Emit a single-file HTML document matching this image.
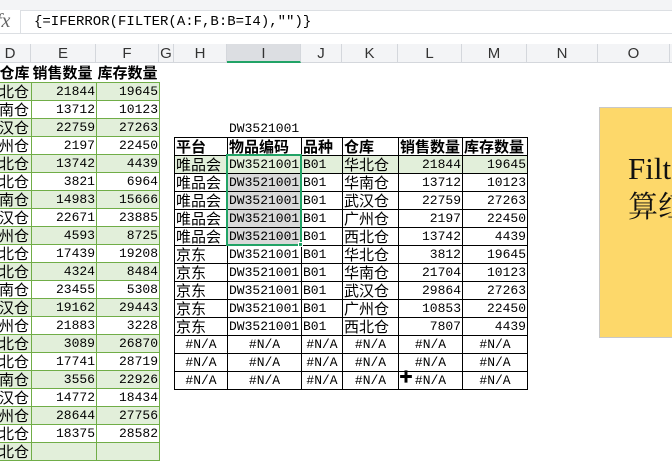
<!DOCTYPE html>
<html><head><meta charset="utf-8"><style>
*{margin:0;padding:0;box-sizing:border-box}
body{width:672px;height:444px;overflow:hidden;background:#fff;position:relative;font-family:"Liberation Sans","Noto Sans CJK SC",sans-serif}
.a{position:absolute}
.cj{font-family:"Noto Sans CJK SC","WenQuanYi Zen Hei",sans-serif;font-size:15px}
.mn{font-family:"Liberation Mono","Noto Sans CJK SC",monospace;font-size:13px}
.ch{position:absolute;top:44px;height:19px;font-size:15px;color:#333;text-align:center;line-height:19px;border-right:1px solid #d4d7dc}
table{border-collapse:collapse;table-layout:fixed;position:absolute}
td{height:18px;padding:0 1px;white-space:nowrap;overflow:hidden;line-height:17px}
.L td{border:1px solid #70ad47}
.L td:first-child{text-align:right;padding-right:2px}
.R td{border:1px solid #000}
.g td{background:#e2efda}
.r{text-align:right}
.c{text-align:center}
b{font-weight:700}
</style></head><body>
<div class="a" style="left:0;top:0;width:672px;height:10px;background:#f3f4f6"></div>
<div class="a" style="left:0;top:10px;width:672px;height:24px;background:#fff;border-bottom:1px solid #dcdfe3"></div>
<div class="a" style="left:-4px;top:10px;font-size:20px;color:#666;font-style:italic;font-family:'Liberation Serif',serif">fx</div>
<div class="a" style="left:20px;top:10px;width:660px;height:24px;border:1px solid #dcdfe3;border-right:none"></div>
<div class="a mn" style="left:34px;top:13px;font-size:14px;line-height:18px">{=IFERROR(FILTER(A:F,B:B=I4),"")}</div>
<div class="a" style="left:0;top:34px;width:672px;height:10px;background:#fff"></div>
<div class="a" style="left:0;top:44px;width:672px;height:19px;background:#f3f4f6;border-bottom:1px solid #d4d7dc"></div>
<div class="ch" style="left:-10px;width:41px">D</div>
<div class="ch" style="left:31px;width:65px">E</div>
<div class="ch" style="left:96px;width:63px">F</div>
<div class="ch" style="left:159px;width:15px">G</div>
<div class="ch" style="left:174px;width:53px">H</div>
<div class="ch" style="left:227px;width:74px;background:#dcdee2;border-bottom:2px solid #21a366">I</div>
<div class="ch" style="left:301px;width:41px">J</div>
<div class="ch" style="left:342px;width:56px">K</div>
<div class="ch" style="left:398px;width:64px">L</div>
<div class="ch" style="left:462px;width:65px">M</div>
<div class="ch" style="left:527px;width:71px">N</div>
<div class="ch" style="left:598px;width:72px">O</div>

<table class="L" style="left:-34px;top:63px;width:193px">
<colgroup><col style="width:65px"><col style="width:65px"><col style="width:63px"></colgroup>
<tr style="height:19px"><td class="cj" style="border:none;border-bottom:1px solid #70ad47"><b>仓库</b></td><td class="cj" style="border:none;border-bottom:1px solid #70ad47"><b>销售数量</b></td><td class="cj" style="border:none;border-bottom:1px solid #70ad47"><b>库存数量</b></td></tr>
<tr class="g"><td class="cj">华北仓</td><td class="mn r">21844</td><td class="mn r">19645</td></tr>
<tr><td class="cj">华南仓</td><td class="mn r">13712</td><td class="mn r">10123</td></tr>
<tr class="g"><td class="cj">武汉仓</td><td class="mn r">22759</td><td class="mn r">27263</td></tr>
<tr><td class="cj">广州仓</td><td class="mn r">2197</td><td class="mn r">22450</td></tr>
<tr class="g"><td class="cj">西北仓</td><td class="mn r">13742</td><td class="mn r">4439</td></tr>
<tr><td class="cj">华北仓</td><td class="mn r">3821</td><td class="mn r">6964</td></tr>
<tr class="g"><td class="cj">华南仓</td><td class="mn r">14983</td><td class="mn r">15666</td></tr>
<tr><td class="cj">武汉仓</td><td class="mn r">22671</td><td class="mn r">23885</td></tr>
<tr class="g"><td class="cj">广州仓</td><td class="mn r">4593</td><td class="mn r">8725</td></tr>
<tr><td class="cj">西北仓</td><td class="mn r">17439</td><td class="mn r">19208</td></tr>
<tr class="g"><td class="cj">华北仓</td><td class="mn r">4324</td><td class="mn r">8484</td></tr>
<tr><td class="cj">华南仓</td><td class="mn r">23455</td><td class="mn r">5308</td></tr>
<tr class="g"><td class="cj">武汉仓</td><td class="mn r">19162</td><td class="mn r">29443</td></tr>
<tr><td class="cj">广州仓</td><td class="mn r">21883</td><td class="mn r">3228</td></tr>
<tr class="g"><td class="cj">西北仓</td><td class="mn r">3089</td><td class="mn r">26870</td></tr>
<tr><td class="cj">华北仓</td><td class="mn r">17741</td><td class="mn r">28719</td></tr>
<tr class="g"><td class="cj">华南仓</td><td class="mn r">3556</td><td class="mn r">22926</td></tr>
<tr><td class="cj">武汉仓</td><td class="mn r">14772</td><td class="mn r">18434</td></tr>
<tr class="g"><td class="cj">广州仓</td><td class="mn r">28644</td><td class="mn r">27756</td></tr>
<tr><td class="cj">西北仓</td><td class="mn r">18375</td><td class="mn r">28582</td></tr>
<tr class="g"><td class="cj">华北仓</td><td class="mn r"></td><td class="mn r"></td></tr>
</table>

<div class="a mn" style="left:229px;top:120px;line-height:17px">DW3521001</div>
<table class="R" style="left:174px;top:137px;width:353px">
<colgroup><col style="width:53px"><col style="width:74px"><col style="width:41px"><col style="width:56px"><col style="width:64px"><col style="width:65px"></colgroup>
<tr><td class="cj"><b>平台</b></td><td class="cj"><b>物品编码</b></td><td class="cj"><b>品种</b></td><td class="cj"><b>仓库</b></td><td class="cj"><b>销售数量</b></td><td class="cj"><b>库存数量</b></td></tr>
<tr class="g"><td class="cj">唯品会</td><td class="mn">DW3521001</td><td class="mn">B01</td><td class="cj">华北仓</td><td class="mn r">21844</td><td class="mn r">19645</td></tr>
<tr><td class="cj">唯品会</td><td class="mn" style="background:#d9d9d9">DW3521001</td><td class="mn">B01</td><td class="cj">华南仓</td><td class="mn r">13712</td><td class="mn r">10123</td></tr>
<tr><td class="cj">唯品会</td><td class="mn" style="background:#d9d9d9">DW3521001</td><td class="mn">B01</td><td class="cj">武汉仓</td><td class="mn r">22759</td><td class="mn r">27263</td></tr>
<tr><td class="cj">唯品会</td><td class="mn" style="background:#d9d9d9">DW3521001</td><td class="mn">B01</td><td class="cj">广州仓</td><td class="mn r">2197</td><td class="mn r">22450</td></tr>
<tr><td class="cj">唯品会</td><td class="mn" style="background:#d9d9d9">DW3521001</td><td class="mn">B01</td><td class="cj">西北仓</td><td class="mn r">13742</td><td class="mn r">4439</td></tr>
<tr><td class="cj">京东</td><td class="mn">DW3521001</td><td class="mn">B01</td><td class="cj">华北仓</td><td class="mn r">3812</td><td class="mn r">19645</td></tr>
<tr><td class="cj">京东</td><td class="mn">DW3521001</td><td class="mn">B01</td><td class="cj">华南仓</td><td class="mn r">21704</td><td class="mn r">10123</td></tr>
<tr><td class="cj">京东</td><td class="mn">DW3521001</td><td class="mn">B01</td><td class="cj">武汉仓</td><td class="mn r">29864</td><td class="mn r">27263</td></tr>
<tr><td class="cj">京东</td><td class="mn">DW3521001</td><td class="mn">B01</td><td class="cj">广州仓</td><td class="mn r">10853</td><td class="mn r">22450</td></tr>
<tr><td class="cj">京东</td><td class="mn">DW3521001</td><td class="mn">B01</td><td class="cj">西北仓</td><td class="mn r">7807</td><td class="mn r">4439</td></tr>
<tr><td class="mn c">#N/A</td><td class="mn c">#N/A</td><td class="mn c">#N/A</td><td class="mn c">#N/A</td><td class="mn c">#N/A</td><td class="mn c">#N/A</td></tr>
<tr><td class="mn c">#N/A</td><td class="mn c">#N/A</td><td class="mn c">#N/A</td><td class="mn c">#N/A</td><td class="mn c">#N/A</td><td class="mn c">#N/A</td></tr>
<tr><td class="mn c">#N/A</td><td class="mn c">#N/A</td><td class="mn c">#N/A</td><td class="mn c">#N/A</td><td class="mn c">#N/A</td><td class="mn c">#N/A</td></tr>
</table>
<div class="a" style="left:226px;top:154px;width:76px;height:92px;border:2px solid #21a366"></div>
<div class="a" style="left:298px;top:242px;width:5px;height:5px;background:#21a366;border:1px solid #fff"></div>
<div class="a" style="left:399px;top:370px;font-size:14px;line-height:14px;color:#000">✚</div>

<div class="a" style="left:599px;top:107px;width:80px;height:231px;background:#fdd86a;border:1px solid #c8c8c8"></div>
<div class="a" style="left:628px;top:150px;font-family:'Liberation Serif','Noto Serif CJK SC',serif;font-size:31px;line-height:38px;color:#111;white-space:nowrap">Filter<br><span style="font-size:30px">算红</span></div>
</body></html>
